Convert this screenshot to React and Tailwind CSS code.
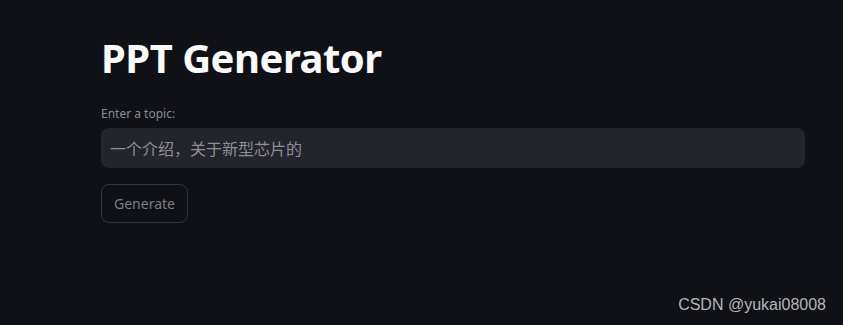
import React from 'react';

export default function App() {
  return (
    <div
      className="relative w-[843px] h-[325px] bg-[#0f1117] overflow-hidden"
      style={{ fontFamily: '"Noto Sans", "Noto Sans CJK SC", sans-serif' }}
    >
      <div className="pl-[101px] pr-[38px] pt-[28px]">
        <h1 className="text-[40px] leading-[60px] font-bold text-[#fafafa] tracking-[-0.5px]">
          PPT Generator
        </h1>

        <label className="block mt-[18px] text-[12px] leading-[16px] text-[#8a8c93]">
          Enter a topic:
        </label>
        <input
          type="text"
          placeholder="一个介绍，关于新型芯片的"
          className="mt-[6px] w-full h-[40px] rounded-[8px] bg-[#23242c] px-[9px] text-[16px] text-[#fafafa] placeholder:text-[#8d8e95] outline-none"
          style={{ fontFamily: '"Noto Sans CJK SC", "Noto Sans", sans-serif' }}
        />

        <button className="mt-[16px] h-[39px] px-[12px] rounded-[8px] border border-[#34353c] text-[14px] text-[#7c7d84] bg-transparent">
          Generate
        </button>
      </div>

      <div
        className="absolute right-[17px] bottom-[8px] text-[16px] text-[#b5b5b5]"
        style={{ fontFamily: '"Liberation Sans", Arial, sans-serif' }}
      >
        CSDN @yukai08008
      </div>
    </div>
  );
}
